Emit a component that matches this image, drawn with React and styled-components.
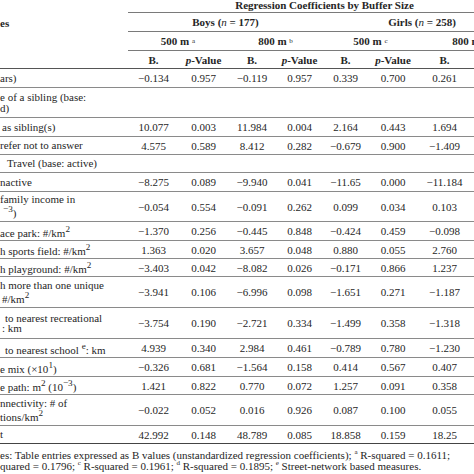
import React from 'react';
import styled, { createGlobalStyle } from 'styled-components';

const GlobalStyle = createGlobalStyle`
  html, body {
    margin: 0;
    padding: 0;
    background: #fff;
    overflow: hidden;
  }
`;

const Frame = styled.div`
  width: 474px;
  height: 474px;
  overflow: hidden;
  background: #fff;
`;

const Sheet = styled.div`
  width: 521px;
  margin-top: -4px;
  font-family: 'Liberation Serif', 'Times New Roman', serif;
  font-size: 11px;
  color: #262626;
`;

const COLS = '128px 51px 49px 48px 47px 45px 50px 53px 50px';

const Row = styled.div`
  display: grid;
  grid-template-columns: ${COLS};
  box-sizing: border-box;
  height: ${p => p.$h}px;
  border-bottom: ${p => (p.$rule ? `1px solid ${p.$rule}` : 'none')};
`;

const HeadCell = styled.div`
  grid-column: span ${p => p.$span || 1};
  display: flex;
  align-items: center;
  justify-content: ${p => (p.$left ? 'flex-start' : 'center')};
  box-sizing: border-box;
  font-weight: bold;
  white-space: nowrap;
  border-bottom: ${p => (p.$rule ? '1px solid #7a7a7a' : 'none')};
  padding-top: ${p => p.$lift || 0}px;
`;

const Label = styled.div`
  display: flex;
  flex-direction: column;
  justify-content: center;
  padding-left: ${p => p.$indent || 0}px;
  line-height: 10.5px;
  white-space: nowrap;
  overflow: hidden;
`;

const Num = styled.div`
  display: flex;
  align-items: center;
  justify-content: center;
  white-space: nowrap;
`;

const Notes = styled.div`
  padding-top: 6px;
  line-height: 10.5px;
  white-space: nowrap;
`;

const rows = [
  { h: 19, label: ['ars)'], v: ['−0.134', '0.957', '−0.119', '0.957', '0.339', '0.700', '0.261'] },
  { h: 30, label: ['e of a sibling (base:', 'd)'], v: [] },
  { h: 19, label: ['as sibling(s)'], indent: 2, v: ['10.077', '0.003', '11.984', '0.004', '2.164', '0.443', '1.694'] },
  { h: 18, label: ['refer not to answer'], v: ['4.575', '0.589', '8.412', '0.282', '−0.679', '0.900', '−1.409'] },
  { h: 18, label: ['Travel (base: active)'], indent: 7, v: [] },
  { h: 19, label: ['nactive'], v: ['−8.275', '0.089', '−9.940', '0.041', '−11.65', '0.000', '−11.184'] },
  {
    h: 30,
    label: ['family income in', <span key="x" style={{ paddingLeft: 3 }}><sup>−3</sup>)</span>],
    v: ['−0.054', '0.554', '−0.091', '0.262', '0.099', '0.034', '0.103']
  },
  { h: 19, label: [<span key="x">ace park: #/km<sup>2</sup></span>], v: ['−1.370', '0.256', '−0.445', '0.848', '−0.424', '0.459', '−0.098'] },
  { h: 18, label: [<span key="x">h sports field: #/km<sup>2</sup></span>], v: ['1.363', '0.020', '3.657', '0.048', '0.880', '0.055', '2.760'] },
  { h: 18, label: [<span key="x">h playground: #/km<sup>2</sup></span>], v: ['−3.403', '0.042', '−8.082', '0.026', '−0.171', '0.866', '1.237'] },
  {
    h: 31,
    label: ['h more than one unique', <span key="x" style={{ paddingLeft: 2 }}>#/km<sup>2</sup></span>],
    v: ['−3.941', '0.106', '−6.996', '0.098', '−1.651', '0.271', '−1.187']
  },
  {
    h: 31,
    label: [<span key="a" style={{ paddingLeft: 5 }}>to nearest recreational</span>, <span key="b" style={{ paddingLeft: 2 }}>: km</span>],
    v: ['−3.754', '0.190', '−2.721', '0.334', '−1.499', '0.358', '−1.318']
  },
  {
    h: 19,
    label: [<span key="x" style={{ paddingLeft: 5 }}>to nearest school <sup>e</sup>: km</span>],
    v: ['4.939', '0.340', '2.984', '0.461', '−0.789', '0.780', '−1.230']
  },
  { h: 19, label: [<span key="x">e mix (×10<sup>1</sup>)</span>], v: ['−0.326', '0.681', '−1.564', '0.158', '0.414', '0.567', '0.407'] },
  {
    h: 18,
    label: [<span key="x">e path: m<sup>2</sup> (10<sup>−3</sup>)</span>],
    v: ['1.421', '0.822', '0.770', '0.072', '1.257', '0.091', '0.358']
  },
  {
    h: 31,
    label: ['nnectivity: # of', <span key="x">tions/km<sup>2</sup></span>],
    v: ['−0.022', '0.052', '0.016', '0.926', '0.087', '0.100', '0.055']
  },
  { h: 18, label: ['t'], v: ['42.992', '0.148', '48.789', '0.085', '18.858', '0.159', '18.25'], last: true }
];

const Sup = styled.sup`
  font-size: 7px;
  font-weight: normal;
  vertical-align: 5px;
  line-height: 0;
`;

const Italic = styled.i`
  font-weight: ${p => (p.$bold ? 'bold' : 'normal')};
`;

export default function App() {
  return (
    <Frame>
      <GlobalStyle />
      <Sheet>
        <Row $h={17}>
          <HeadCell />
          <HeadCell $span={8} $rule $lift={1}>Regression Coefficients by Buffer Size</HeadCell>
        </Row>
        <Row $h={19}>
          <HeadCell $left>es</HeadCell>
          <HeadCell $span={4} $rule>Boys (<Italic>n</Italic>&nbsp;= 177)</HeadCell>
          <HeadCell $span={4} $rule>Girls (<Italic>n</Italic>&nbsp;= 258)</HeadCell>
        </Row>
        <Row $h={19}>
          <HeadCell />
          <HeadCell $span={2} $rule>500 m&nbsp;<Sup>a</Sup></HeadCell>
          <HeadCell $span={2} $rule>800 m&nbsp;<Sup>b</Sup></HeadCell>
          <HeadCell $span={2} $rule>500 m&nbsp;<Sup>c</Sup></HeadCell>
          <HeadCell $span={2} $rule>800 m&nbsp;<Sup>d</Sup></HeadCell>
        </Row>
        <Row $h={18} $rule="#555">
          <HeadCell />
          {[0, 1, 2, 3].map(i => (
            <React.Fragment key={i}>
              <HeadCell>B.</HeadCell>
              <HeadCell><Italic $bold>p</Italic>-Value</HeadCell>
            </React.Fragment>
          ))}
        </Row>
        {rows.map((r, i) => (
          <Row key={i} $h={r.h} $rule={r.last ? '#444' : '#8a8a8a'}>
            <Label $indent={r.indent}>
              {r.label.map((l, j) => (
                <div key={j}>{l}</div>
              ))}
            </Label>
            {Array.from({ length: 8 }).map((_, j) => (
              <Num key={j}>{r.v[j] || ''}</Num>
            ))}
          </Row>
        ))}
        <Notes>
          <div>
            es: Table entries expressed as B values (unstandardized regression coefficients); <Sup>a</Sup> R-squared = 0.1611;
          </div>
          <div>
            quared = 0.1796; <Sup>c</Sup> R-squared = 0.1961; <Sup>d</Sup> R-squared = 0.1895; <Sup>e</Sup> Street-network based measures.
          </div>
        </Notes>
      </Sheet>
    </Frame>
  );
}
